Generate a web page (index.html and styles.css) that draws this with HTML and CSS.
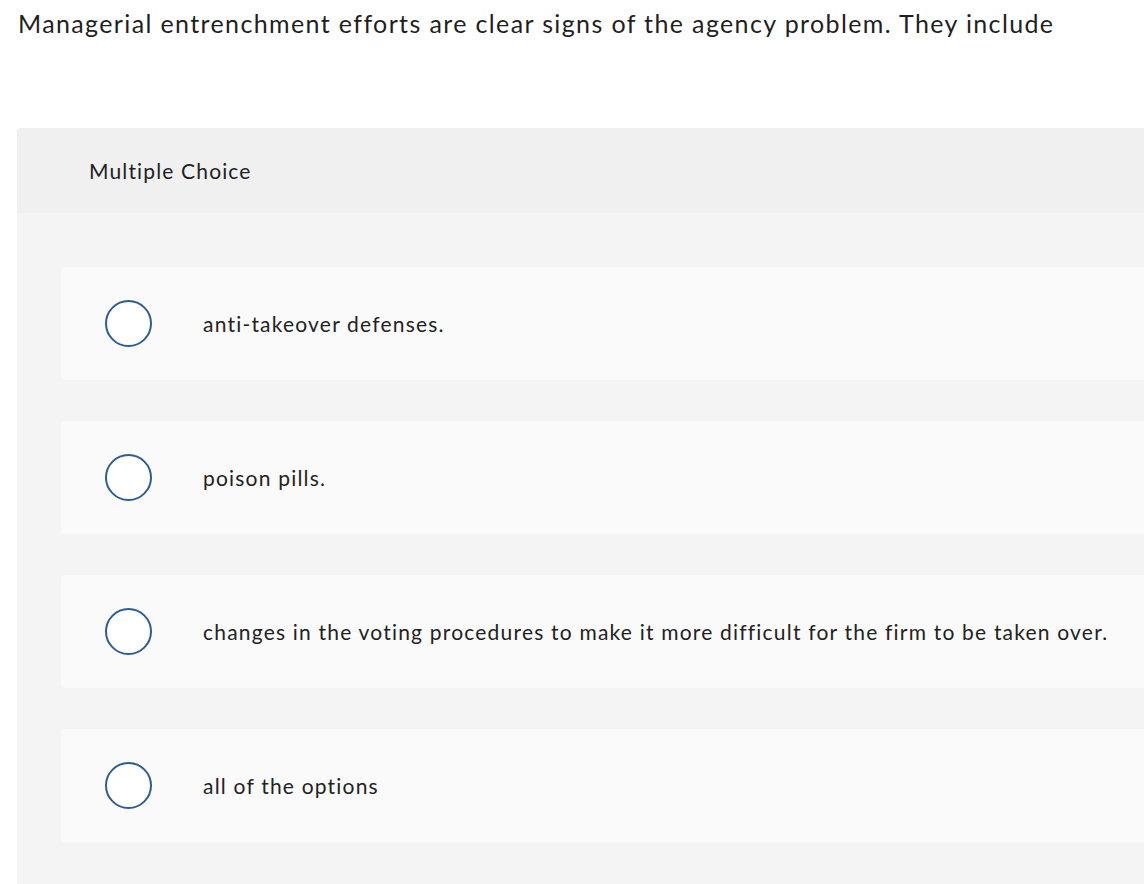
FILE: index.html
```html
<!DOCTYPE html>
<html>
<head>
<meta charset="utf-8">
<link rel="stylesheet" href="styles.css">
</head>
<body>
<p class="question">Managerial entrenchment efforts are clear signs of the agency problem. They include</p>
<section class="panel">
  <div class="panel-head">Multiple Choice</div>
  <div class="panel-body">
    <label class="option"><span class="radio"></span><span class="opt-text">anti-takeover defenses.</span></label>
    <label class="option"><span class="radio"></span><span class="opt-text">poison pills.</span></label>
    <label class="option"><span class="radio"></span><span class="opt-text">changes in the voting procedures to make it more difficult for the firm to be taken over.</span></label>
    <label class="option"><span class="radio"></span><span class="opt-text">all of the options</span></label>
  </div>
</section>
</body>
</html>
```
FILE: styles.css
```css
html, body {
  margin: 0;
  padding: 0;
  overflow: hidden;
  background: #ffffff;
}
body {
  font-family: Lato, "Noto Sans", sans-serif;
  color: #222222;
  width: 1144px;
  height: 884px;
  font-variant-ligatures: none;
}
.question {
  margin: 0;
  padding: 6px 0 0 18px;
  font-size: 25px;
  line-height: 34px;
  letter-spacing: 1.37px;
  color: #1f1f1f;
  white-space: nowrap;
}
.panel {
  margin: 88px 0 0 17px;
  width: 1180px;
  background: #f4f4f4;
  border-radius: 4px 4px 0 0;
}
.panel-head {
  background: #f0f0f0;
  height: 85px;
  display: flex;
  align-items: center;
  padding-left: 72px;
  font-size: 21px;
  letter-spacing: 1.15px;
  color: #222;
  border-radius: 4px 4px 0 0;
}
.panel-body {
  padding: 54px 0 60px 44px;
  display: flex;
  flex-direction: column;
  gap: 41px;
}
.option {
  height: 113px;
  background: #fafafa;
  border-radius: 4px;
  display: flex;
  align-items: center;
  padding-left: 44px;
}
.radio {
  width: 43px;
  height: 43px;
  border: 2px solid #2d5d92;
  border-radius: 50%;
  background: #ffffff;
  flex: none;
}
.opt-text {
  margin-left: 51px;
  font-size: 21px;
  letter-spacing: 1.2px;
  color: #222;
  white-space: nowrap;
}
```
